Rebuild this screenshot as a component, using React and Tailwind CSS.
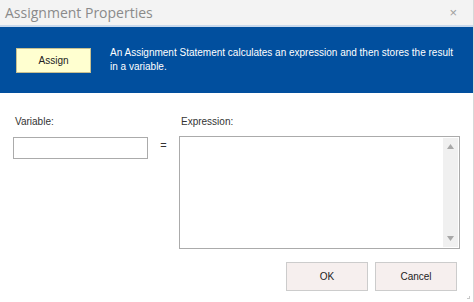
import React from "react";

const ScrollArrow = ({ up }) => (
  <svg width="7" height="5" viewBox="0 0 7 5" className="text-[#a8a8a8]">
    {up ? <path d="M0 5 L3.5 0 L7 5 Z" fill="currentColor" /> : <path d="M0 0 L3.5 5 L7 0 Z" fill="currentColor" />}
  </svg>
);

export default function App() {
  return (
    <div
      className="w-[474px] h-[302px] bg-white flex flex-col border-r border-[#d8d8d8] relative overflow-hidden"
      style={{ fontFamily: '"Liberation Sans", Arial, sans-serif' }}
    >
      {/* Title bar */}
      <div className="h-[25px] bg-[#f3f3f3] flex items-center px-[5px] shrink-0">
        <span
          className="text-[14px] text-[#8a8a8a] leading-none"
          style={{ fontFamily: '"Open Sans", "Noto Sans", sans-serif' }}
        >
          Assignment Properties
        </span>
        <span className="ml-auto mr-[11px] text-[#a0a0a0] text-[13px] leading-none">×</span>
      </div>
      <div className="h-[2px] bg-[#c9d9ec] shrink-0" />

      {/* Header band */}
      <div className="h-[66px] bg-[#014f9e] flex items-center pl-[16px] pr-[14px] shrink-0">
        <button className="w-[75px] h-[25px] bg-[#ffffd0] border border-[#c8c090] text-[10px] text-[#222] shrink-0">
          Assign
        </button>
        <p className="ml-[19px] text-[10px] leading-[14px] text-white">
          An Assignment Statement calculates an expression and then stores the result in a variable.
        </p>
      </div>

      {/* Body */}
      <div className="flex px-[13px] pt-[22px]">
        <div className="flex flex-col w-[135px]">
          <span className="text-[10px] text-[#333] pl-[2px] leading-[14px]">Variable:</span>
          <div className="mt-[8px] h-[22px] border border-[#ababab] bg-white" />
        </div>
        <div className="w-[31px] flex justify-center pt-[23px]">
          <span className="text-[11px] text-[#333] leading-[14px]">=</span>
        </div>
        <div className="flex flex-col w-[281px]">
          <span className="text-[10px] text-[#333] pl-[2px] leading-[14px]">Expression:</span>
          <div className="mt-[7px] h-[113px] border border-[#ababab] bg-white flex justify-end p-[1px]">
            <div className="w-[15px] bg-[#f0f0f0] flex flex-col items-center justify-between py-[6px]">
              <ScrollArrow up />
              <ScrollArrow />
            </div>
          </div>
        </div>
      </div>

      {/* Footer buttons */}
      <div className="flex justify-end gap-[7px] pr-[16px] pt-[13px]">
        <button className="w-[82px] h-[29px] bg-[#f6efee] border border-[#cccccc] text-[10px] text-[#222]">
          OK
        </button>
        <button className="w-[82px] h-[29px] bg-[#f6efee] border border-[#cccccc] text-[10px] text-[#222]">
          Cancel
        </button>
      </div>

      {/* resize grip */}
      <div className="absolute right-[3px] bottom-[3px] w-[3px] h-[3px] border-r border-b border-[#c8c8c8]" />
    </div>
  );
}
